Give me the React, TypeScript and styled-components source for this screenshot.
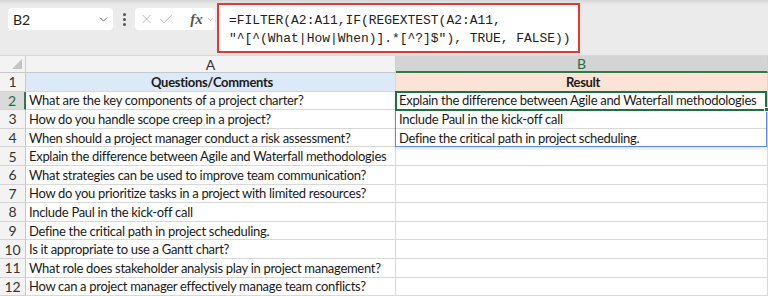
import React from "react";
import styled, { createGlobalStyle } from "styled-components";
import { X, Check, ChevronDown } from "lucide-react";

const GlobalStyle = createGlobalStyle`
  html, body { margin: 0; padding: 0; background: #ffffff; overflow: hidden; }
  * { box-sizing: border-box; }
`;

const SHEET_FONT = `"Lato", "Liberation Sans", sans-serif`;
const ROW_H = 18.6;
const HEAD_H = 18;

const Page = styled.div`
  width: 768px;
  height: 296px;
  overflow: hidden;
  font-family: ${SHEET_FONT};
  background: #ffffff;
`;

const Toolbar = styled.div`
  height: 55px;
  display: flex;
  align-items: flex-start;
  padding-left: 8px;
  background: linear-gradient(#d6d6d6 0px, #e4e4e4 3px, #ebebeb 5px, #ebebeb 100%);
`;

const NameBox = styled.div`
  margin-top: 8px;
  width: 105px;
  height: 22px;
  background: #ffffff;
  border-radius: 4px;
  display: flex;
  align-items: center;
  justify-content: space-between;
  padding: 0 3px 0 5px;
  font-size: 14px;
  color: #222;
`;

const Dots = styled.div`
  margin: 13px 9px 0 10px;
  display: flex;
  flex-direction: column;
  gap: 2px;
  span {
    display: block;
    width: 3px;
    height: 3px;
    border-radius: 50%;
    background: #555;
  }
`;

const FxBox = styled.div`
  margin-top: 8px;
  width: 80px;
  height: 22px;
  background: #ffffff;
  border-radius: 4px;
  display: flex;
  align-items: center;
  padding-left: 4px;
  gap: 4px;
  color: #a9a9a9;
`;

const FxLabel = styled.span`
  font-family: "Liberation Serif", serif;
  font-style: italic;
  font-weight: bold;
  font-size: 15px;
  color: #555;
  margin-left: 12px;
  margin-right: -1px;
`;

const FormulaFrame = styled.div`
  margin-top: 3px;
  margin-left: 2px;
  width: 363px;
  height: 50px;
  border: 2px solid #e3373a;
  background: #ffffff;
  padding: 7px 0 0 10px;
  font-family: "Liberation Mono", monospace;
  font-size: 12.95px;
  line-height: 18px;
  color: #222;
  white-space: pre;
`;

const Sheet = styled.div`
  position: relative;
  display: grid;
  grid-template-columns: 26px 370px 1fr;
  grid-template-rows: ${HEAD_H}px;
  grid-auto-rows: ${ROW_H}px;
`;

const Corner = styled.div`
  background: #f3f3f3;
  border-right: 1px solid #d0d0d0;
  border-bottom: 1px solid #c8c8c8;
  border-top: 1px solid #d8d8d8;
  position: relative;
  &::after {
    content: "";
    position: absolute;
    right: 3px;
    bottom: 3px;
    border-style: solid;
    border-width: 0 0 10px 10px;
    border-color: transparent transparent #c4c4c4 transparent;
  }
`;

const ColHead = styled.div<{ $sel?: boolean }>`
  background: ${(p) => (p.$sel ? "#d4d4d4" : "#f3f3f3")};
  border-top: 1px solid #d8d8d8;
  border-right: 1px solid #d0d0d0;
  border-bottom: ${(p) => (p.$sel ? "2px solid #2d7a4b" : "1px solid #c8c8c8")};
  color: ${(p) => (p.$sel ? "#1f6e43" : "#333")};
  font-size: 14px;
  display: flex;
  align-items: center;
  justify-content: center;
`;

const RowHead = styled.div<{ $sel?: boolean }>`
  background: ${(p) => (p.$sel ? "#dadada" : "#f3f3f3")};
  border-bottom: 1px solid #d4d4d4;
  border-right: ${(p) => (p.$sel ? "2px solid #2d7a4b" : "1px solid #c8c8c8")};
  color: ${(p) => (p.$sel ? "#1f6e43" : "#333")};
  font-size: 14px;
  display: flex;
  align-items: center;
  justify-content: center;
`;

const Cell = styled.div<{ $bg?: string; $head?: boolean }>`
  background: ${(p) => p.$bg || "#ffffff"};
  border-right: 1px solid #d8d8d8;
  border-bottom: 1px solid #d8d8d8;
  font-size: 13px;
  letter-spacing: -0.3px;
  color: #1a1a1a;
  font-weight: ${(p) => (p.$head ? 700 : 400)};
  display: flex;
  align-items: center;
  justify-content: ${(p) => (p.$head ? "center" : "flex-start")};
  padding-left: 3px;
  white-space: nowrap;
  overflow: visible;
`;

const SpillRange = styled.div`
  position: absolute;
  border: 1px solid #5b8fd8;
  box-shadow: 0 2px 3px rgba(0, 0, 0, 0.12);
  pointer-events: none;
`;

const ActiveCell = styled.div`
  position: absolute;
  border: 2px solid #1f7043;
  pointer-events: none;
`;

const FillHandle = styled.div`
  position: absolute;
  width: 5px;
  height: 5px;
  background: #1f7043;
  border: 1px solid #fff;
  pointer-events: none;
`;

const questions = [
  "What are the key components of a project charter?",
  "How do you handle scope creep in a project?",
  "When should a project manager conduct a risk assessment?",
  "Explain the difference between Agile and Waterfall methodologies",
  "What strategies can be used to improve team communication?",
  "How do you prioritize tasks in a project with limited resources?",
  "Include Paul in the kick-off call",
  "Define the critical path in project scheduling.",
  "Is it appropriate to use a Gantt chart?",
  "What role does stakeholder analysis play in project management?",
  "How can a project manager effectively manage team conflicts?",
];

const results = [
  "Explain the difference between Agile and Waterfall methodologies",
  "Include Paul in the kick-off call",
  "Define the critical path in project scheduling.",
];

const rowTop = (r: number) => HEAD_H + ROW_H * (r - 1);

export default function App() {
  return (
    <Page>
      <GlobalStyle />
      <Toolbar>
        <NameBox>
          <span>B2</span>
          <ChevronDown size={13} color="#555" strokeWidth={1.6} />
        </NameBox>
        <Dots>
          <span />
          <span />
          <span />
        </Dots>
        <FxBox>
          <X size={18} strokeWidth={1.3} />
          <Check size={19} strokeWidth={1.3} />
          <FxLabel>fx</FxLabel>
          <ChevronDown size={11} color="#888" strokeWidth={1.6} />
        </FxBox>
        <FormulaFrame>
          {"=FILTER(A2:A11,IF(REGEXTEST(A2:A11,\n\"^[^(What|How|When)].*[^?]$\"), TRUE, FALSE))"}
        </FormulaFrame>
      </Toolbar>
      <Sheet>
        <Corner />
        <ColHead>A</ColHead>
        <ColHead $sel>B</ColHead>

        <RowHead>1</RowHead>
        <Cell $head $bg="#dce9f6">Questions/Comments</Cell>
        <Cell $head $bg="#fbe3d6">Result</Cell>

        {questions.map((q, i) => (
          <React.Fragment key={i}>
            <RowHead $sel={i === 0}>{i + 2}</RowHead>
            <Cell>{q}</Cell>
            <Cell>{results[i] || ""}</Cell>
          </React.Fragment>
        ))}

        <SpillRange
          style={{ left: 395, top: rowTop(2) - 1, width: 372, height: ROW_H * 3 + 1 }}
        />
        <ActiveCell style={{ left: 395, top: rowTop(2) - 1, width: 372, height: ROW_H + 1.5 }} />
        <FillHandle style={{ left: 764, top: rowTop(3) - 3.5 }} />
      </Sheet>
    </Page>
  );
}
